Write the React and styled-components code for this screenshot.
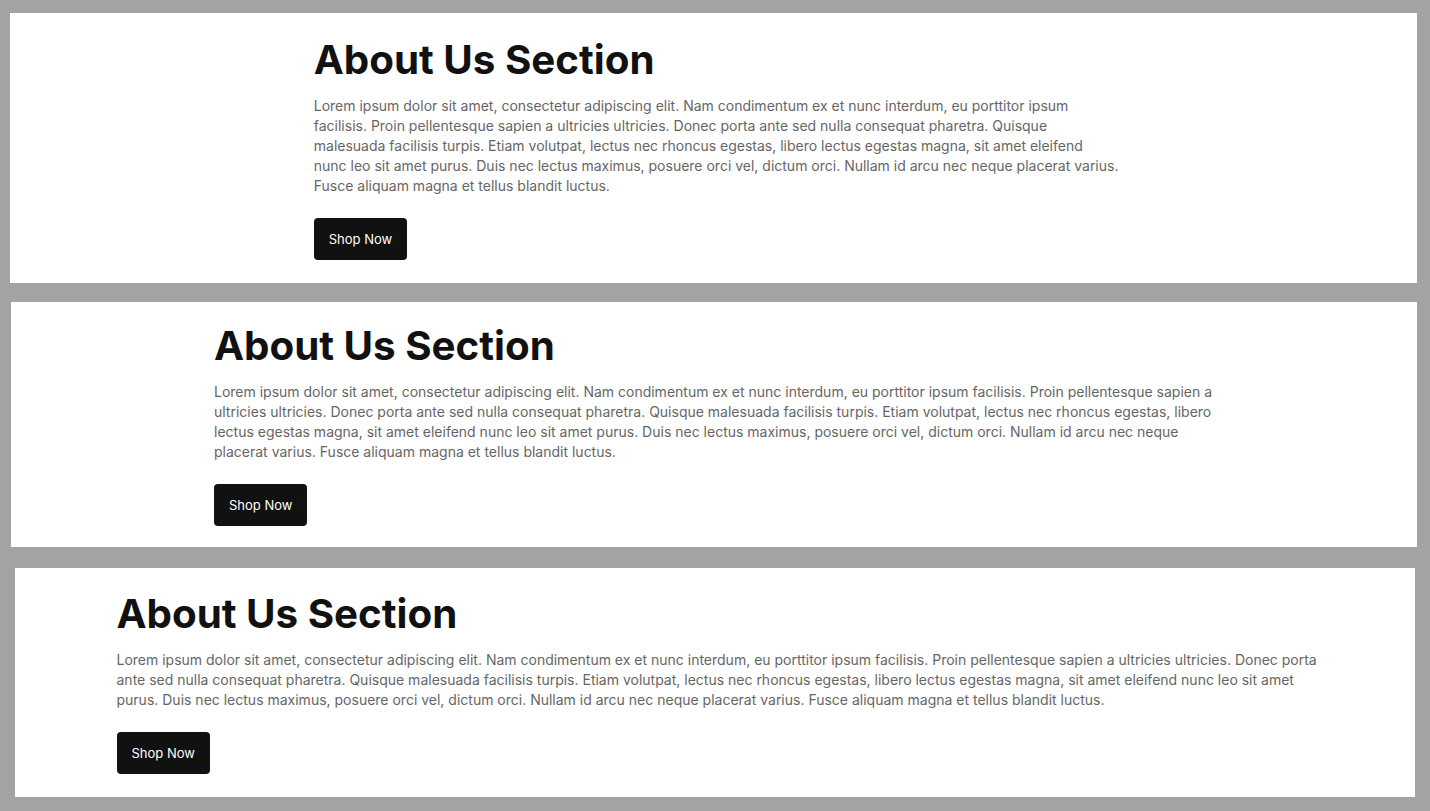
import React from "react";
import styled, { createGlobalStyle } from "styled-components";

const text =
	"Lorem ipsum dolor sit amet, consectetur adipiscing elit. Nam condimentum ex et nunc interdum, eu porttitor ipsum facilisis. Proin pellentesque sapien a ultricies ultricies. Donec porta ante sed nulla consequat pharetra. Quisque malesuada facilisis turpis. Etiam volutpat, lectus nec rhoncus egestas, libero lectus egestas magna, sit amet eleifend nunc leo sit amet purus. Duis nec lectus maximus, posuere orci vel, dictum orci. Nullam id arcu nec neque placerat varius. Fusce aliquam magna et tellus blandit luctus.";

const sections = [
	{ width: 805.5, margin: "13px 13px 0 10px", pad: "23px 17px 23px 23px" },
	{ width: 1000, margin: "19px 13px 0 11px", pad: "20px 20px 21px" },
	{ width: 1201, margin: "21px 15px 14px 15px", pad: "22px 16px 23px 20px" },
];

const App = () => {
	return (
		<>
			<GlobalStyle />
			<Page>
				{sections.map((s, i) => (
					<Section key={i} $margin={s.margin} $pad={s.pad}>
						<Inner $width={s.width}>
							<Title>About Us Section</Title>
							<Text>{text}</Text>
							<Button>Shop Now</Button>
						</Inner>
					</Section>
				))}
			</Page>
		</>
	);
};

export default App;

const GlobalStyle = createGlobalStyle`
	body {
		margin: 0;
		background: #a3a3a3;
		font-family: Inter, "Noto Sans", sans-serif;
	}
`;

const Page = styled.main`
	display: flex;
	flex-direction: column;
	min-height: 811px;
`;

const Section = styled.section`
	background: #ffffff;
	margin: ${(p) => p.$margin};
	padding: ${(p) => p.$pad};
	display: flex;
	justify-content: center;
`;

const Inner = styled.div`
	width: 100%;
	max-width: ${(p) => p.$width}px;
	display: flex;
	flex-direction: column;
	align-items: flex-start;
`;

const Title = styled.h2`
	margin: 0 0 12px;
	font-size: 40.3px;
	line-height: 48px;
	font-weight: 700;
	color: #111111;
`;

const Text = styled.p`
	margin: 0 0 22px;
	font-size: 14px;
	line-height: 20px;
	color: #666666;
`;

const Button = styled.button`
	height: 42px;
	padding: 0 15px;
	border: none;
	border-radius: 4px;
	background: #111111;
	color: #ffffff;
	font-family: Inter, sans-serif;
	font-size: 13px;
	font-weight: 400;
	cursor: pointer;
`;
